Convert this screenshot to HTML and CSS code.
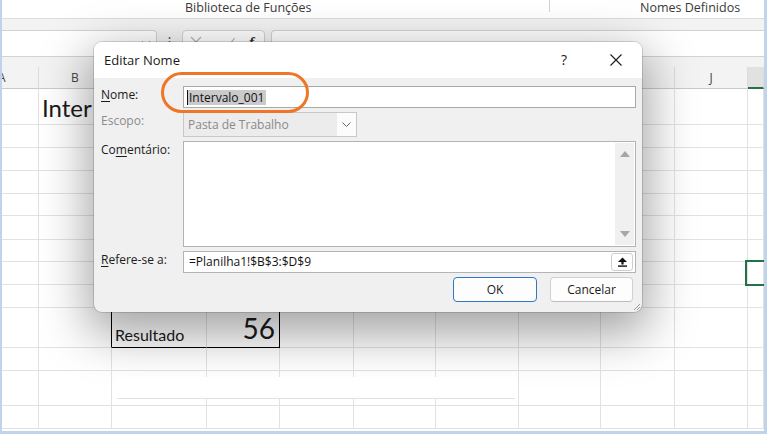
FILE: index.html
```html
<!DOCTYPE html>
<html lang="pt-BR">
<head>
<meta charset="utf-8">
<title>Editar Nome</title>
<link rel="stylesheet" href="styles.css">
</head>
<body>
<div class="app">
  <header class="ribbon">
    <div class="grp grp-fn">Biblioteca de Funções</div>
    <div class="rsep"></div>
    <div class="grp grp-names">Nomes Definidos</div>
  </header>

  <div class="fbar">
    <div class="namebox">
      <svg class="nb-chev" width="8" height="5" viewBox="0 0 8 5"><polyline points="0.5,0.5 4,4 7.5,0.5" fill="none" stroke="#555" stroke-width="1"/></svg>
    </div>
    <div class="fdots">⋮</div>
    <div class="fbtns">
      <svg class="fb-x" width="12" height="12" viewBox="0 0 12 12"><path d="M1 1L11 11M11 1L1 11" stroke="#b4b4b4" stroke-width="1.2" fill="none"/></svg>
      <svg class="fb-ok" width="10" height="10" viewBox="0 0 10 10"><path d="M0.5 6L3.5 9L9.5 1" stroke="#b4b4b4" stroke-width="1.2" fill="none"/></svg>
      <span class="fx"><i>f</i><sub>x</sub></span>
    </div>
    <div class="finput"></div>
  </div>

  <div class="sheet">
    <div class="ch ch-a"><span>A</span></div><div class="ch">B</div><div class="ch">C</div><div class="ch">D</div><div class="ch">E</div><div class="ch">F</div><div class="ch">G</div><div class="ch">H</div><div class="ch">I</div><div class="ch">J</div><div class="ch ch-sel"></div>

    <div></div><div class="big">Inter</div><div></div><div></div><div></div><div></div><div></div><div></div><div></div><div></div><div></div>
    <div></div><div></div><div></div><div></div><div></div><div></div><div></div><div></div><div></div><div></div><div></div>
    <div></div><div></div><div></div><div></div><div></div><div></div><div></div><div></div><div></div><div></div><div></div>
    <div></div><div></div><div></div><div></div><div></div><div></div><div></div><div></div><div></div><div></div><div></div>
    <div></div><div></div><div></div><div></div><div></div><div></div><div></div><div></div><div></div><div></div><div></div>
    <div></div><div></div><div></div><div></div><div></div><div></div><div></div><div></div><div></div><div></div><div></div>
    <div></div><div></div><div></div><div></div><div></div><div></div><div></div><div></div><div></div><div></div><div></div>
    <div></div><div></div><div></div><div></div><div></div><div></div><div></div><div></div><div></div><div></div><div class="sel"></div>
    <div></div><div></div><div></div><div></div><div></div><div></div><div></div><div></div><div></div><div></div><div></div>
    <div></div><div class="bxr"></div><div class="res bxb">Resultado</div><div class="num bxb bxr">56</div><div></div><div></div><div></div><div></div><div></div><div></div><div></div>
    <div></div><div></div><div></div><div></div><div></div><div></div><div></div><div></div><div></div><div></div><div></div>
    <div></div><div></div><div></div><div></div><div></div><div></div><div></div><div></div><div></div><div></div><div></div>
    <div></div><div></div><div></div><div></div><div></div><div></div><div></div><div></div><div></div><div></div><div></div>
  </div>

  <div class="dialog">
    <div class="dlg-title">
      <span class="dlg-name">Editar Nome</span>
      <span class="dlg-help">?</span>
      <span class="dlg-close">
        <svg width="12" height="12" viewBox="0 0 12 12"><path d="M0.5 0.5L11.5 11.5M11.5 0.5L0.5 11.5" stroke="#1b1b1b" stroke-width="1.1" fill="none"/></svg>
      </span>
    </div>
    <div class="dlg-body">
      <label class="lbl"><u>N</u>ome:</label>
      <div class="field name-field"><span class="caret"></span><span class="seltext">Intervalo_001</span></div>

      <label class="lbl dis">Escopo:</label>
      <div class="combo">
        <span class="combo-text">Pasta de Trabalho</span>
        <span class="combo-btn"><svg width="9" height="5" viewBox="0 0 9 5"><polyline points="0.5,0.5 4.5,4.5 8.5,0.5" fill="none" stroke="#666" stroke-width="1"/></svg></span>
      </div>

      <label class="lbl">Co<u>m</u>entário:</label>
      <div class="memo">
        <div class="vscroll">
          <svg width="10" height="6" viewBox="0 0 10 6"><polygon points="0,6 5,0 10,6" fill="#a6a6a6"/></svg>
          <svg width="10" height="6" viewBox="0 0 10 6"><polygon points="0,0 10,0 5,6" fill="#a6a6a6"/></svg>
        </div>
      </div>

      <label class="lbl"><u>R</u>efere-se a:</label>
      <div class="field ref-field">
        <span class="ref-text">=Planilha1!$B$3:$D$9</span>
        <span class="collapse-btn"><svg width="9" height="10" viewBox="0 0 9 10"><polygon points="0,5 4.5,0.5 9,5" fill="#111"/><rect x="3.4" y="4.5" width="2.2" height="3" fill="#111"/><rect x="0" y="8.4" width="9" height="1.4" fill="#111"/></svg></span>
      </div>

      <div class="actions">
        <button class="btn btn-ok">OK</button>
        <button class="btn btn-cancel">Cancelar</button>
      </div>
    </div>
    <svg class="grip" width="10" height="10" viewBox="0 0 10 10"><path d="M9 3L3 9M9 6L6 9" stroke="#9a9a9a" stroke-width="1" fill="none"/></svg>
  </div>

  <div class="ring"></div>
  <div class="glitch"></div>
</div>
</body>
</html>
```

FILE: styles.css
```css
* { box-sizing: border-box; }
html, body { margin: 0; padding: 0; }
body {
  width: 767px;
  height: 434px;
  overflow: hidden;
  background: #fff;
  font-family: "Open Sans", "Noto Sans", sans-serif;
  color: #1b1b1b;
}

.app {
  position: relative;
  width: 767px;
  height: 434px;
  border-left: 2px solid #bfd4ea;
  border-right: 3px solid #bfd4ea;
  border-bottom: 3px solid #bfd4ea;
  display: flex;
  flex-direction: column;
  overflow: hidden;
  background: #fff;
}

/* ribbon group labels */
.ribbon {
  flex: none;
  height: 19px;
  display: flex;
  background: #fff;
  border-bottom: 1px solid #dcdcdc;
  font-size: 12.5px;
  line-height: 16px;
  color: #3a3a3a;
}
.grp-fn { width: 547px; padding-left: 183px; }
.rsep { width: 1px; height: 12px; background: #d2d2d2; }
.grp-names { flex: 1; padding-left: 90px; }

/* formula bar */
.fbar {
  flex: none;
  height: 48px;
  display: flex;
  align-items: flex-start;
  padding-top: 11px;
  background: #f3f3f3;
}
.namebox {
  position: relative;
  width: 155px;
  height: 27px;
  background: #fff;
  border: 1px solid #d2d2d2;
  border-left: none;
  border-radius: 0 4px 4px 0;
}
.nb-chev { position: absolute; left: 140px; top: 10px; }
.fdots {
  width: 25px;
  text-align: center;
  font-size: 13px;
  line-height: 22px;
  color: #555;
}
.fbtns {
  width: 83px;
  height: 27px;
  display: flex;
  align-items: flex-start;
  padding: 4px 0 0 7px;
  background: #fff;
  border: 1px solid #d2d2d2;
  border-radius: 4px;
}
.fb-x { margin-top: 1px; }
.fb-ok { margin: 2px 0 0 23px; }
.fx {
  margin-left: 14px;
  font-family: "Liberation Serif", serif;
  font-size: 15px;
  line-height: 14px;
  color: #333;
  font-weight: bold;
}
.fx sub { font-size: 9px; font-style: normal; }
.finput {
  flex: 1;
  height: 27px;
  margin-left: 6px;
  background: #fff;
  border: 1px solid #d2d2d2;
  border-right: none;
  border-radius: 4px 0 0 4px;
}

/* worksheet */
.sheet {
  flex: 1;
  display: grid;
  grid-template-columns: 37px 73px 95px 73px 74px 82px 83px 82px 74px 73px 1fr;
  grid-template-rows: 22px 36px 23px 23px 23px 22px 24px 22px 23px 23px 40px 23px 35px 23px 1fr;
  overflow: hidden;
  font-family: Lato, "Liberation Sans", sans-serif;
  color: #1a1a1a;
}
.sheet > div {
  min-width: 0;
  border-right: 1px solid #e2e2e2;
  border-bottom: 1px solid #e2e2e2;
  display: flex;
  align-items: flex-end;
  white-space: nowrap;
}
.sheet > .ch {
  background: #f3f3f3;
  border-right-color: #dcdcdc;
  border-bottom-color: #cacaca;
  justify-content: center;
  align-items: center;
  font-family: "Open Sans", sans-serif;
  font-size: 12px;
  color: #444;
}
.sheet > .ch-a { justify-content: flex-start; }
.ch-a span { margin-left: -4px; }
.sheet > .ch-sel {
  background: #e1e1e1;
  border-bottom: 2px solid #217346;
}
.big {
  font-size: 24px;
  line-height: 28px;
  padding: 0 0 2px 3px;
}
.res {
  font-size: 16px;
  line-height: 19px;
  padding: 0 0 3px 3px;
}
.num {
  justify-content: flex-end;
  font-size: 28px;
  line-height: 33px;
  padding: 0 4px 2px 0;
}
.sheet > .bxr { border-right-color: #000; }
.sheet > .bxb { border-bottom-color: #000; }
.sel { position: relative; }
.sel::after {
  content: "";
  position: absolute;
  left: -3px;
  top: -2px;
  right: -3px;
  bottom: -2px;
  border: 2px solid #217346;
}

/* dialog */
.dialog {
  position: absolute;
  left: 92px;
  top: 42px;
  width: 548px;
  height: 270px;
  border-radius: 8px;
  background: #f0f0f0;
  overflow: hidden;
  box-shadow: 0 0 0 1px rgba(0,0,0,0.14), 0 16px 48px 6px rgba(0,0,0,0.36);
  font-size: 12px;
  line-height: 16px;
  z-index: 2;
}
.dlg-title {
  height: 36px;
  display: flex;
  align-items: center;
  padding-left: 10px;
  background: #fff;
}
.dlg-name { font-size: 13px; color: #1a1a1a; }
.dlg-help {
  margin-left: auto;
  width: 40px;
  text-align: center;
  font-size: 14px;
  color: #1a1a1a;
}
.dlg-close {
  width: 52px;
  margin-left: 6px;
  display: flex;
  justify-content: center;
}
.dlg-body {
  display: grid;
  grid-template-columns: 82px 453px;
  grid-template-rows: 22px 25px 106px 22px 25px;
  row-gap: 4px;
  padding: 8px 6px 10px 7px;
}
.lbl { padding-top: 1px; color: #1b1b1b; }
.lbl u { text-underline-offset: 2px; }
.lbl.dis { color: #8c8c8c; }

.field {
  display: flex;
  align-items: center;
  background: #fff;
  border: 1px solid #b3b3b3;
}
.name-field { padding-left: 3px; border-color: #a9a9a9; }
.caret { width: 1px; height: 15px; background: #111; }
.seltext {
  background: #cacaca;
  line-height: 15px;
  padding: 0 2px 0 1px;
  color: #111;
}

.combo {
  display: flex;
  background: #ececec;
  border: 1px solid #c8c8c8;
  width: 174px;
}
.combo-text {
  flex: 1;
  padding-left: 4px;
  line-height: 23px;
  color: #8a8a8a;
}
.combo-btn {
  width: 19px;
  background: #fcfcfc;
  display: flex;
  align-items: center;
  justify-content: center;
}

.memo {
  display: flex;
  justify-content: flex-end;
  padding: 1px;
  background: #fff;
  border: 1px solid #b3b3b3;
}
.vscroll {
  width: 19px;
  background: #f0f0f0;
  display: flex;
  flex-direction: column;
  justify-content: space-between;
  align-items: center;
  padding: 8px 0;
}

.ref-field { padding-left: 5px; }
.ref-text { flex: 1; color: #111; }
.collapse-btn {
  width: 22px;
  height: 18px;
  margin-right: 2px;
  display: flex;
  align-items: center;
  justify-content: center;
  background: #fff;
  border: 1px solid #cdcdcd;
  border-radius: 3px;
}

.actions {
  grid-column: 1 / -1;
  display: flex;
  justify-content: flex-end;
  gap: 13px;
  padding-right: 3px;
}
.btn {
  width: 83px;
  height: 25px;
  margin: 0;
  padding: 0;
  font-family: "Open Sans", "Noto Sans", sans-serif;
  font-size: 12px;
  color: #1b1b1b;
  background: #fdfdfd;
  border: 1px solid #d0d0d0;
  border-bottom-color: #bdbdbd;
  border-radius: 4px;
}
.btn-ok { width: 84px; border-color: #2f78c8; }
.grip { position: absolute; right: 1px; bottom: 1px; }

/* annotation ring */
.ring {
  position: absolute;
  left: 159px;
  top: 72px;
  width: 148px;
  height: 41px;
  border: 3px solid #ee7626;
  border-radius: 22px;
  z-index: 3;
}

/* capture artefact strip */
.glitch {
  position: absolute;
  left: 115px;
  top: 377px;
  width: 398px;
  height: 22px;
  background: #fff;
  border-bottom: 1px solid #e2e2e2;
  z-index: 3;
}
```
